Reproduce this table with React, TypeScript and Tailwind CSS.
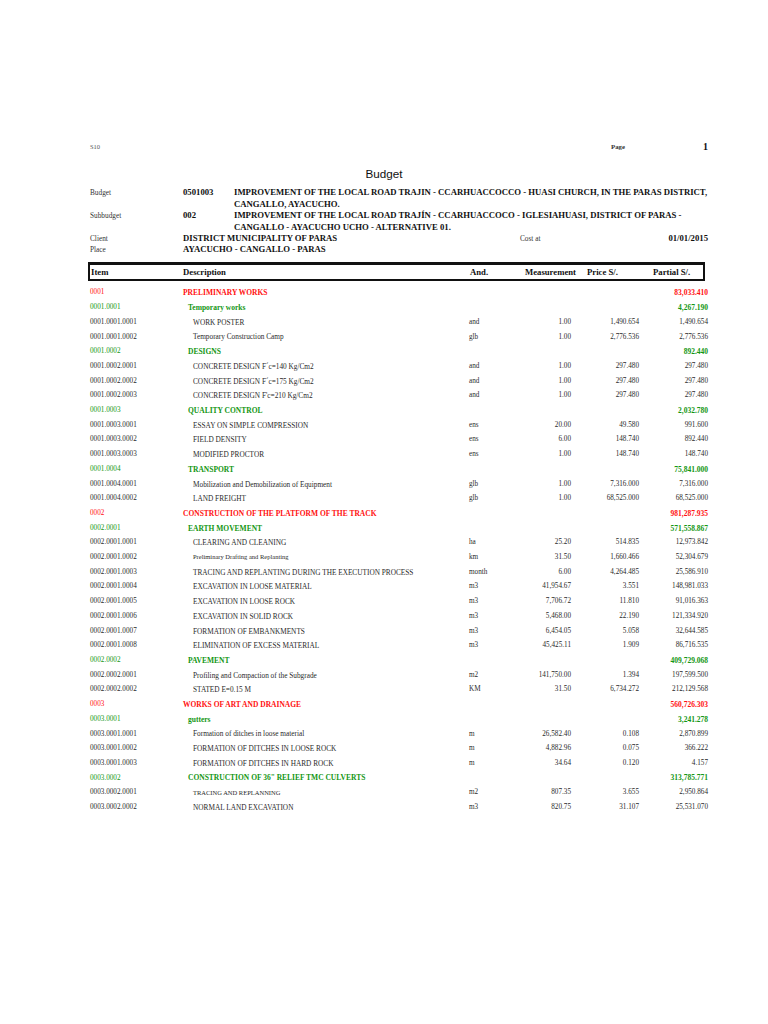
import React from "react";

type Row = {
  code: string;
  desc: string;
  level: 1 | 2 | 3;
  unit?: string;
  meas?: string;
  price?: string;
  partial: string;
  small?: boolean;
};

const rows: Row[] = [
  { code: "0001", desc: "PRELIMINARY WORKS", level: 1, partial: "83,033.410" },
  { code: "0001.0001", desc: "Temporary works", level: 2, partial: "4,267.190" },
  { code: "0001.0001.0001", desc: "WORK POSTER", level: 3, unit: "and", meas: "1.00", price: "1,490.654", partial: "1,490.654" },
  { code: "0001.0001.0002", desc: "Temporary Construction Camp", level: 3, unit: "glb", meas: "1.00", price: "2,776.536", partial: "2,776.536" },
  { code: "0001.0002", desc: "DESIGNS", level: 2, partial: "892.440" },
  { code: "0001.0002.0001", desc: "CONCRETE DESIGN F´c=140 Kg/Cm2", level: 3, unit: "and", meas: "1.00", price: "297.480", partial: "297.480" },
  { code: "0001.0002.0002", desc: "CONCRETE DESIGN F´c=175 Kg/Cm2", level: 3, unit: "and", meas: "1.00", price: "297.480", partial: "297.480" },
  { code: "0001.0002.0003", desc: "CONCRETE DESIGN F'c=210 Kg/Cm2", level: 3, unit: "and", meas: "1.00", price: "297.480", partial: "297.480" },
  { code: "0001.0003", desc: "QUALITY CONTROL", level: 2, partial: "2,032.780" },
  { code: "0001.0003.0001", desc: "ESSAY ON SIMPLE COMPRESSION", level: 3, unit: "ens", meas: "20.00", price: "49.580", partial: "991.600" },
  { code: "0001.0003.0002", desc: "FIELD DENSITY", level: 3, unit: "ens", meas: "6.00", price: "148.740", partial: "892.440" },
  { code: "0001.0003.0003", desc: "MODIFIED PROCTOR", level: 3, unit: "ens", meas: "1.00", price: "148.740", partial: "148.740" },
  { code: "0001.0004", desc: "TRANSPORT", level: 2, partial: "75,841.000" },
  { code: "0001.0004.0001", desc: "Mobilization and Demobilization of Equipment", level: 3, unit: "glb", meas: "1.00", price: "7,316.000", partial: "7,316.000" },
  { code: "0001.0004.0002", desc: "LAND FREIGHT", level: 3, unit: "glb", meas: "1.00", price: "68,525.000", partial: "68,525.000" },
  { code: "0002", desc: "CONSTRUCTION OF THE PLATFORM OF THE TRACK", level: 1, partial: "981,287.935" },
  { code: "0002.0001", desc: "EARTH MOVEMENT", level: 2, partial: "571,558.867" },
  { code: "0002.0001.0001", desc: "CLEARING AND CLEANING", level: 3, unit: "ha", meas: "25.20", price: "514.835", partial: "12,973.842" },
  { code: "0002.0001.0002", desc: "Preliminary Drafting and Replanting", level: 3, unit: "km", meas: "31.50", price: "1,660.466", partial: "52,304.679", small: true },
  { code: "0002.0001.0003", desc: "TRACING AND REPLANTING DURING THE EXECUTION PROCESS", level: 3, unit: "month", meas: "6.00", price: "4,264.485", partial: "25,586.910" },
  { code: "0002.0001.0004", desc: "EXCAVATION IN LOOSE MATERIAL", level: 3, unit: "m3", meas: "41,954.67", price: "3.551", partial: "148,981.033" },
  { code: "0002.0001.0005", desc: "EXCAVATION IN LOOSE ROCK", level: 3, unit: "m3", meas: "7,706.72", price: "11.810", partial: "91,016.363" },
  { code: "0002.0001.0006", desc: "EXCAVATION IN SOLID ROCK", level: 3, unit: "m3", meas: "5,468.00", price: "22.190", partial: "121,334.920" },
  { code: "0002.0001.0007", desc: "FORMATION OF EMBANKMENTS", level: 3, unit: "m3", meas: "6,454.05", price: "5.058", partial: "32,644.585" },
  { code: "0002.0001.0008", desc: "ELIMINATION OF EXCESS MATERIAL", level: 3, unit: "m3", meas: "45,425.11", price: "1.909", partial: "86,716.535" },
  { code: "0002.0002", desc: "PAVEMENT", level: 2, partial: "409,729.068" },
  { code: "0002.0002.0001", desc: "Profiling and Compaction of the Subgrade", level: 3, unit: "m2", meas: "141,750.00", price: "1.394", partial: "197,599.500" },
  { code: "0002.0002.0002", desc: "STATED E=0.15 M", level: 3, unit: "KM", meas: "31.50", price: "6,734.272", partial: "212,129.568" },
  { code: "0003", desc: "WORKS OF ART AND DRAINAGE", level: 1, partial: "560,726.303" },
  { code: "0003.0001", desc: "gutters", level: 2, partial: "3,241.278" },
  { code: "0003.0001.0001", desc: "Formation of ditches in loose material", level: 3, unit: "m", meas: "26,582.40", price: "0.108", partial: "2,870.899" },
  { code: "0003.0001.0002", desc: "FORMATION OF DITCHES IN LOOSE ROCK", level: 3, unit: "m", meas: "4,882.96", price: "0.075", partial: "366.222" },
  { code: "0003.0001.0003", desc: "FORMATION OF DITCHES IN HARD ROCK", level: 3, unit: "m", meas: "34.64", price: "0.120", partial: "4.157" },
  { code: "0003.0002", desc: 'CONSTRUCTION OF 36" RELIEF TMC CULVERTS', level: 2, partial: "313,785.771" },
  { code: "0003.0002.0001", desc: "TRACING AND REPLANNING", level: 3, unit: "m2", meas: "807.35", price: "3.655", partial: "2,950.864", small: true },
  { code: "0003.0002.0002", desc: "NORMAL LAND EXCAVATION", level: 3, unit: "m3", meas: "820.75", price: "31.107", partial: "25,531.070" },
];

function TableRow({ r }: { r: Row }) {
  if (r.level === 1) {
    return (
      <div className="grid grid-cols-[93px_286px_51px_51px_68px_69px] h-[14.71px] items-center leading-none text-[#ff1010]">
        <div className="text-[7.2px]">{r.code}</div>
        <div className="col-span-4 text-[7.5px] font-bold">{r.desc}</div>
        <div className="text-right text-[7.5px] font-bold">{r.partial}</div>
      </div>
    );
  }
  if (r.level === 2) {
    return (
      <div className="grid grid-cols-[93px_286px_51px_51px_68px_69px] h-[14.71px] items-center leading-none text-[#139613]">
        <div className="text-[7.2px]">{r.code}</div>
        <div className="col-span-4 pl-[5px] text-[7.5px] font-bold">{r.desc}</div>
        <div className="text-right text-[7.5px] font-bold">{r.partial}</div>
      </div>
    );
  }
  return (
    <div className="grid grid-cols-[93px_286px_51px_51px_68px_69px] h-[14.71px] items-center leading-none text-[#2a2a2a]">
      <div className="text-[7.2px]">{r.code}</div>
      <div className={r.small ? "pl-[10px] text-[6.5px]" : "pl-[10px] text-[7.3px]"}>{r.desc}</div>
      <div className="text-[7.2px]">{r.unit}</div>
      <div className="text-right text-[7.2px]">{r.meas}</div>
      <div className="text-right text-[7.2px]">{r.price}</div>
      <div className="text-right text-[7.2px]">{r.partial}</div>
    </div>
  );
}

export default function App() {
  return (
    <div className="w-[768px] h-[1024px] bg-white font-['Liberation_Serif',serif] text-[#333] overflow-hidden">
      <div className="pl-[90px] pr-[60px] pt-[143px]">
        <div className="flex items-center h-[8px] leading-none">
          <div className="flex-1 text-[6.5px] text-[#555]">S10</div>
          <div className="w-[92px] text-[6.8px] font-bold text-[#333]">Page</div>
          <div className="text-[10px] font-bold text-[#111]">1</div>
        </div>
      </div>
      <div className="mt-[16px] h-[14px] leading-[14px] text-center font-['Liberation_Sans',sans-serif] text-[11.7px] text-[#111]">
        Budget
      </div>
      <div className="pl-[90px] pr-[60px] mt-[6.3px] leading-[11.4px]">
        <div className="grid grid-cols-[93px_51px_1fr]">
          <div className="text-[7.3px] text-[#333]">Budget</div>
          <div className="text-[8.7px] font-bold text-[#111]">0501003</div>
          <div className="text-[8.7px] font-bold text-[#111]">
            <div className="whitespace-nowrap">IMPROVEMENT OF THE LOCAL ROAD TRAJIN - CCARHUACCOCCO - HUASI CHURCH, IN THE PARAS DISTRICT,</div>
            <div>CANGALLO, AYACUCHO.</div>
          </div>
        </div>
        <div className="grid grid-cols-[93px_51px_1fr]">
          <div className="text-[7.3px] text-[#333]">Subbudget</div>
          <div className="text-[8.7px] font-bold text-[#111]">002</div>
          <div className="text-[8.7px] font-bold text-[#111]">
            <div className="whitespace-nowrap">IMPROVEMENT OF THE LOCAL ROAD TRAJÍN - CCARHUACCOCO - IGLESIAHUASI, DISTRICT OF PARAS -</div>
            <div>CANGALLO - AYACUCHO UCHO - ALTERNATIVE 01.</div>
          </div>
        </div>
        <div className="grid grid-cols-[93px_337px_56px_1fr] items-baseline">
          <div className="text-[7.3px] text-[#333]">Client</div>
          <div className="text-[8.7px] font-bold text-[#111]">DISTRICT MUNICIPALITY OF PARAS</div>
          <div className="text-[7.3px] text-[#333]">Cost at</div>
          <div className="text-right text-[8.7px] font-bold text-[#111]">01/01/2015</div>
        </div>
        <div className="grid grid-cols-[93px_1fr] items-baseline">
          <div className="text-[7.3px] text-[#333]">Place</div>
          <div className="text-[8.7px] font-bold text-[#111]">AYACUCHO - CANGALLO - PARAS</div>
        </div>
      </div>
      <div className="pl-[88px] pr-[63px] mt-[6.3px]">
        <div className="h-[19px] border-x-2 border-t-[3px] border-b-2 border-[#111] flex items-center leading-none text-[8.7px] font-bold text-[#111]">
          <div className="w-[93px] pl-[1px]">Item</div>
          <div className="w-[287px]">Description</div>
          <div className="w-[55px]">And.</div>
          <div className="w-[62px]">Measurement</div>
          <div className="w-[66px]">Price S/.</div>
          <div>Partial S/.</div>
        </div>
      </div>
      <div className="pl-[90px] pr-[60px] mt-[4.65px]">
        {rows.map((r) => (
          <TableRow key={r.code} r={r} />
        ))}
      </div>
    </div>
  );
}
